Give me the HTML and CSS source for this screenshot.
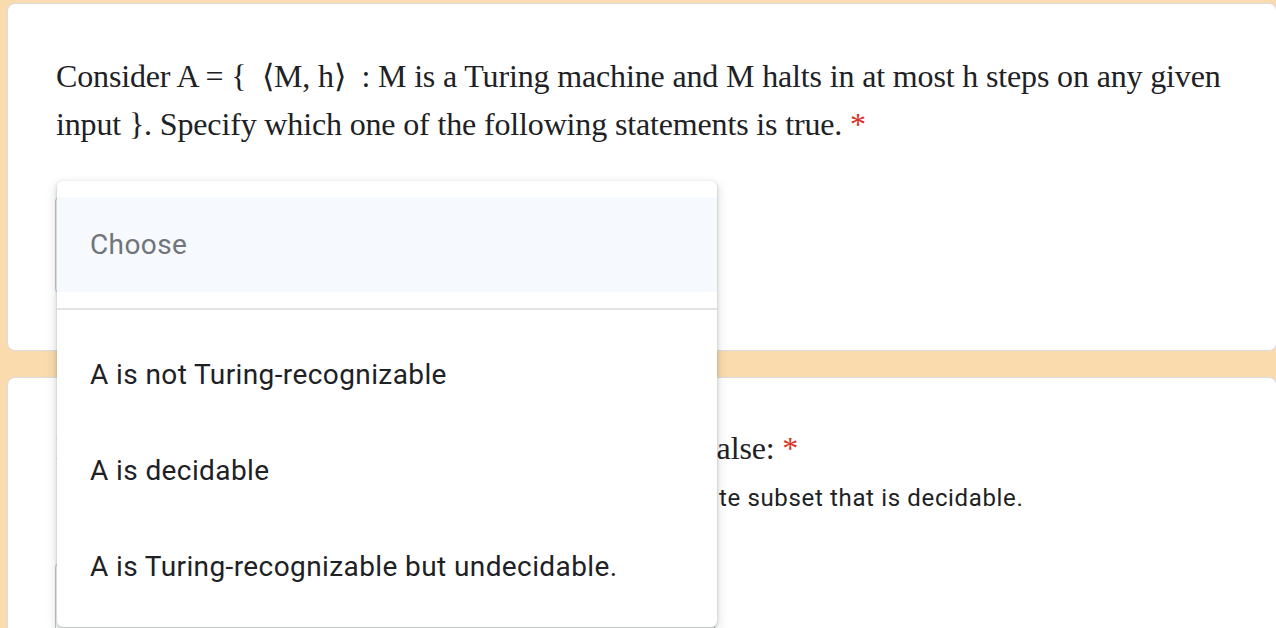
FILE: index.html
```html
<!DOCTYPE html>
<html lang="en">
<head>
<meta charset="utf-8">
<title>Form</title>
<link rel="stylesheet" href="styles.css">
</head>
<body>
<main class="page">
  <section class="card card-one">
    <div class="title">Consider A = {&nbsp; ⟨M, h⟩&nbsp; : M is a Turing machine and M halts in at most h steps on any given input }. Specify which one of the following statements is true. <span class="req">*</span></div>
    <div class="select-box"></div>
  </section>
  <section class="card card-two">
    <div class="title">Determine which one of the following sentences is false: <span class="req">*</span></div>
    <div class="desc">Every infinite Turing-recognizable language has some infinite subset that is decidable.</div>
    <div class="select-box"></div>
  </section>
</main>
<div class="menu">
  <div class="menu-choose">Choose</div>
  <div class="menu-divider"></div>
  <div class="menu-list">
    <div class="menu-item">A is not Turing-recognizable</div>
    <div class="menu-item">A is decidable</div>
    <div class="menu-item">A is Turing-recognizable but undecidable.</div>
  </div>
</div>
</body>
</html>
```

FILE: styles.css
```css
html, body {
  margin: 0;
  padding: 0;
}
body {
  background: #f9dbae;
  width: 1276px;
  height: 628px;
  overflow: hidden;
  position: relative;
}
.page {
  padding: 3px 0 0 7px;
  display: flex;
  flex-direction: column;
  gap: 26px;
}
.card {
  box-sizing: border-box;
  width: 1270px;
  background: #ffffff;
  border: 1px solid #dadce0;
  border-radius: 8px;
  padding: 48px 48px 0 48px;
}
.card-one {
  height: 348px;
}
.card-two {
  height: 300px;
  padding-top: 46px;
}
.title {
  font-family: "Liberation Serif", "Times New Roman", serif;
  font-size: 32px;
  letter-spacing: -0.15px;
  line-height: 48px;
  color: #202124;
  width: 1180px;
}
.req {
  color: #d93025;
}
.desc {
  font-family: Roboto, "Liberation Sans", sans-serif;
  font-size: 24px;
  letter-spacing: 0.65px;
  line-height: 32px;
  color: #202124;
  margin-top: 10px;
}
.select-box {
  box-sizing: border-box;
  width: 660px;
  height: 96px;
  border: 1px solid #c4c7c5;
  border-radius: 4px;
  margin-top: 49px;
  margin-left: -1px;
}
.menu {
  position: absolute;
  left: 57px;
  top: 181px;
  width: 660px;
  height: 446px;
  background: #ffffff;
  border-radius: 6px;
  box-shadow: 0 1px 3px rgba(60, 64, 67, 0.3), 0 4px 10px 2px rgba(60, 64, 67, 0.15);
  padding-top: 16px;
  box-sizing: border-box;
  font-family: Roboto, "Liberation Sans", sans-serif;
  font-size: 28px;
  letter-spacing: 0.4px;
}
.menu-choose {
  height: 95px;
  background: #f6f9fe;
  color: #70757a;
  display: flex;
  align-items: center;
  padding-left: 33px;
}
.menu-divider {
  margin-top: 16px;
  height: 2px;
  background: #e2e3e5;
}
.menu-list {
  padding-top: 16px;
}
.menu-item {
  height: 96px;
  display: flex;
  align-items: center;
  padding-left: 33px;
  color: #202124;
}
```
